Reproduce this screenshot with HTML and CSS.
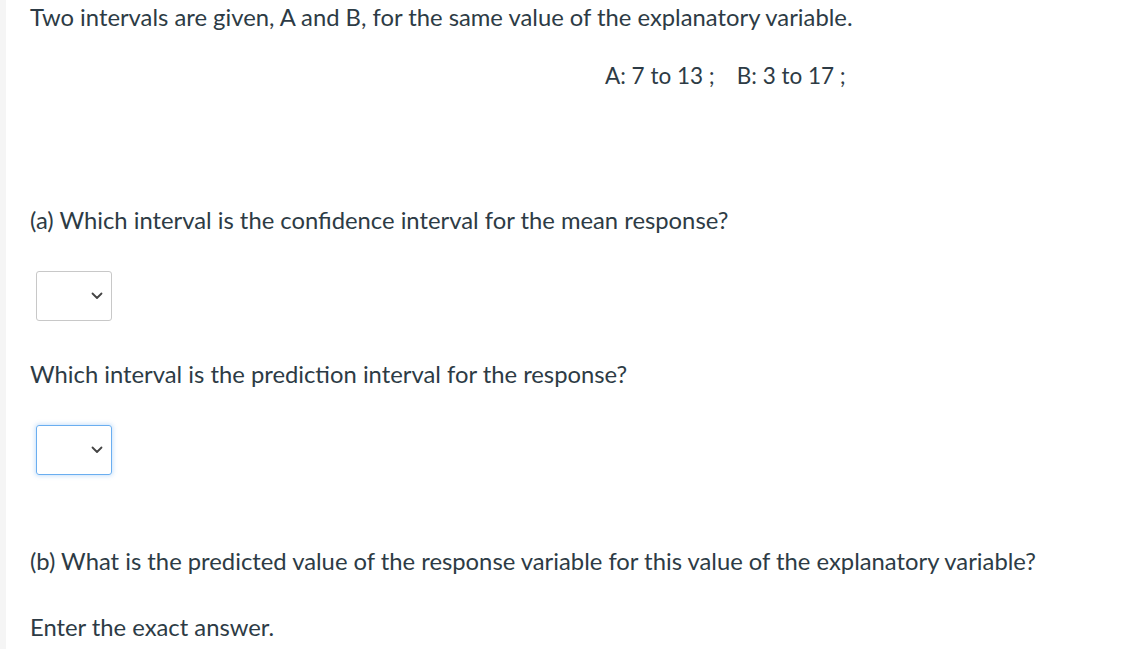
FILE: index.html
```html
<!DOCTYPE html>
<html>
<head>
<meta charset="utf-8">
<link rel="stylesheet" href="styles.css">
</head>
<body>
<div class="page">
  <div class="strip"></div>
  <div class="content">
    <p class="line l1">Two intervals are given, A and B, for the same value of the explanatory variable.</p>
    <p class="line l2"><span class="iv">A: 7 to 13 ;</span><span class="iv">B: 3 to 17 ;</span></p>
    <p class="line l3">(a) Which interval is the confidence interval for the mean response?</p>
    <div class="sel"><svg width="12" height="8" viewBox="0 0 12 8"><path d="M1.5 1.5 L6 6 L10.5 1.5" fill="none" stroke="#444" stroke-width="1.8" stroke-linecap="round" stroke-linejoin="round"/></svg></div>
    <p class="line l4">Which interval is the prediction interval for the response?</p>
    <div class="sel focus"><svg width="12" height="8" viewBox="0 0 12 8"><path d="M1.5 1.5 L6 6 L10.5 1.5" fill="none" stroke="#444" stroke-width="1.8" stroke-linecap="round" stroke-linejoin="round"/></svg></div>
    <p class="line l5">(b) What is the predicted value of the response variable for this value of the explanatory variable?</p>
    <p class="line l6">Enter the exact answer.</p>
  </div>
</div>
</body>
</html>
```
FILE: styles.css
```css
html, body { margin: 0; padding: 0; background: #fff; }
body { font-family: Lato, "Noto Sans", sans-serif; color: #2d3b45; font-size: 23.8px; }
.page { display: flex; min-height: 649px; }
.strip { width: 6px; background: #f5f5f5; flex: none; }
.content { padding-left: 24px; }
.line { margin: 0; line-height: 30px; }
.l1 { margin-top: 2px; }
.l2 { margin-top: 29px; padding-left: 575px; font-size: 22.5px; }
.iv { margin-right: 22px; }
.l3 { margin-top: 114px; }
.sel { margin-top: 36px; margin-left: 6px; width: 66px; height: 48px; border: 1px solid #c8c8c8; border-radius: 3px; display: flex; align-items: center; justify-content: flex-end; padding-right: 8px; box-sizing: content-box; }
.sel svg { display: block; }
.sel.focus { border-color: #6aaef0; box-shadow: 0 0 4px 1px rgba(100,170,240,0.35); }
.l4 { margin-top: 38px; }
.l5 { margin-top: 71px; }
.l6 { margin-top: 36px; }
```
